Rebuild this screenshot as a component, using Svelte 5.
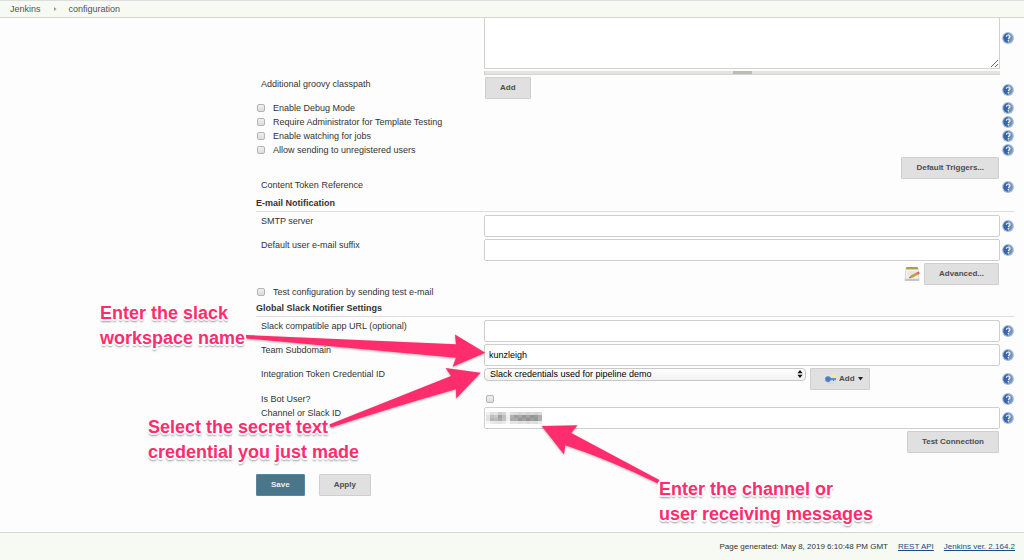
<script lang="ts">
	let teamSubdomain = $state('kunzleigh');
	let credential = $state('slack');

	const pipelineOptions = [
		{ id: 'debug', label: 'Enable Debug Mode' },
		{ id: 'require-admin', label: 'Require Administrator for Template Testing' },
		{ id: 'watching', label: 'Enable watching for jobs' },
		{ id: 'unregistered', label: 'Allow sending to unregistered users' },
	];

	// grey levels of the redacted channel id, one row of cells per line
	const redacted = [
		[240, 222, 226, 205, 212, 244, 222, 218, 212, 218, 210, 216, 210, 218],
		[226, 190, 200, 160, 190, 240, 176, 158, 168, 150, 165, 148, 156, 176],
		[224, 180, 186, 170, 194, 238, 170, 170, 150, 162, 146, 160, 150, 176],
		[244, 234, 230, 228, 234, 248, 228, 230, 222, 226, 220, 226, 222, 232],
	];

	const notes = [
		{ id: 'workspace', lines: ['Enter the slack', 'workspace name'] },
		{ id: 'credential', lines: ['Select the secret text', 'credential you just made'] },
		{ id: 'recipient', lines: ['Enter the channel or', 'user receiving messages'] },
	];
</script>

{#snippet help()}
	<button class="help" type="button" aria-label="Help">
		<svg viewBox="0 0 12 12" width="12" height="12">
			<circle cx="6" cy="6" r="5.9" fill="#a3badb" />
			<circle cx="6" cy="6" r="4.7" fill="#7392c4" />
			<path d="M6 1.3a4.7 4.7 0 0 0 0 9.4z" fill="#3a65a8" />
			<path d="M4.4 4.8C4.5 3.5 5.2 3 6.2 3c1 0 1.8.6 1.8 1.5 0 1.3-1.6 1.4-1.6 2.6" fill="none" stroke="#f2f6fb" stroke-width="1.2" />
			<circle cx="6.3" cy="8.7" r=".8" fill="#f2f6fb" />
		</svg>
	</button>
{/snippet}

<div class="page">
	<nav class="breadcrumbs">
		<a href="#jenkins">Jenkins</a>
		<svg viewBox="0 0 4 6" width="4" height="6"><path d="M1 1l2.5 2L1 5z" fill="#999" /></svg>
		<a href="#configuration">configuration</a>
	</nav>

	<main>
		<form onsubmit={(e) => e.preventDefault()}>
			<div class="row flush">
				<span></span>
				<div class="script-box">
					<textarea aria-label="Default content"></textarea>
					<div class="resize-bar"><i></i></div>
				</div>
				{@render help()}
			</div>
			<div class="row classpath">
				<span class="name">Additional groovy classpath</span>
				<div class="control start"><button class="btn" type="button">Add</button></div>
				{@render help()}
			</div>
			{#each pipelineOptions as option}
				<div class="row check-row">
					<label class="check"><input type="checkbox" id={option.id} />{option.label}</label>
					{@render help()}
				</div>
			{/each}
			<div class="row buttons flush">
				<button class="btn" type="button">Default Triggers...</button>
			</div>
			<div class="row token">
				<span class="name">Content Token Reference</span>
				<span></span>
				{@render help()}
			</div>

			<h2>E-mail Notification</h2>
			<div class="row">
				<label class="name" for="smtp">SMTP server</label>
				<input class="text" id="smtp" type="text" />
				{@render help()}
			</div>
			<div class="row">
				<label class="name" for="suffix">Default user e-mail suffix</label>
				<input class="text" id="suffix" type="text" />
				{@render help()}
			</div>
			<div class="row buttons">
				<svg viewBox="0 0 16 16" width="16" height="16">
					<path d="M2 2h12l1 12.5H1z" fill="#f1f1ef" stroke="#c9c9c5" stroke-width=".7" />
					<path d="M1 12.8h14v2H1z" fill="#c4c4c1" />
					<path d="M2.2 1h11.6v2.4H2.2z" fill="#b59a45" />
					<path d="M3.5 6h8M3.5 8h6M3.5 10h3" stroke="#d4d4d4" stroke-width=".7" />
					<path d="M5.4 12l1.4-2.3 6.6-3.4 1.3 1.7-6.6 3.6z" fill="#cf9c3c" stroke="#a77628" stroke-width=".4" />
					<path d="M12.8 6.6l1.6-1 1.6 1.6-1.6 1z" fill="#e2565a" />
					<path d="M5.2 12.2l.7-1.2.7.8z" fill="#444" />
				</svg>
				<button class="btn" type="button">Advanced...</button>
			</div>
			<div class="row check-row">
				<label class="check"><input type="checkbox" />Test configuration by sending test e-mail</label>
			</div>

			<h2>Global Slack Notifier Settings</h2>
			<div class="row">
				<label class="name" for="app-url">Slack compatible app URL (optional)</label>
				<input class="text" id="app-url" type="text" />
				{@render help()}
			</div>
			<div class="row">
				<label class="name" for="team">Team Subdomain</label>
				<input class="text" id="team" type="text" bind:value={teamSubdomain} />
				{@render help()}
			</div>
			<div class="row">
				<label class="name" for="credential">Integration Token Credential ID</label>
				<div class="control start">
					<span class="select">
						<select id="credential" bind:value={credential}>
							<option value="slack">Slack credentials used for pipeline demo</option>
						</select>
						<svg viewBox="0 0 6 8" width="6" height="8"><path d="M3 0l2.6 3.3H.4zM3 8L.4 4.7h5.2z" fill="#111" /></svg>
					</span>
					<button class="btn add-credential" type="button">
						<svg viewBox="0 0 11 10" width="11" height="10">
							<circle cx="8.6" cy="2.6" r="2.3" fill="#f5ec8e" />
							<rect x="4" y="4" width="7" height="2.2" fill="#5c8fd0" />
							<path d="M8 6h1v1H8z" fill="#4777b4" />
							<circle cx="3" cy="5.1" r="2.9" fill="#4a7fc6" />
							<path d="M2 9h7" stroke="#cfcfcf" />
						</svg>
						Add
						<svg viewBox="0 0 5 4" width="5" height="4"><path d="M0 0h5L2.5 3.6z" fill="#222" /></svg>
					</button>
				</div>
				{@render help()}
			</div>
			<div class="row bot">
				<label class="name" for="bot">Is Bot User?</label>
				<div class="control"><input id="bot" type="checkbox" /></div>
				{@render help()}
			</div>
			<div class="row">
				<label class="name" for="channel">Channel or Slack ID</label>
				<div class="channel">
					<input class="text" id="channel" type="text" />
					<svg viewBox="0 0 56 12" width="56" height="12" shape-rendering="crispEdges">
						{#each redacted as line, y}
							{#each line as grey, x}
								<rect x={x * 4} y={y * 3} width="4" height="3" fill="rgb({grey},{grey},{grey})" />
							{/each}
						{/each}
					</svg>
				</div>
				{@render help()}
			</div>
			<div class="row buttons">
				<button class="btn" type="button">Test Connection</button>
			</div>

			<div class="actions">
				<button class="btn primary" type="submit">Save</button>
				<button class="btn" type="button">Apply</button>
			</div>
		</form>
	</main>

	<footer>
		<span>Page generated: May 8, 2019 6:10:48 PM GMT</span>
		<a href="#api">REST API</a>
		<a href="#version">Jenkins ver. 2.164.2</a>
	</footer>

	<div class="annotations">
		<svg viewBox="0 0 1024 560" width="1024" height="560" fill="#ff2d6e">
			<path d="M246 335L456 344.3L455 334.6L485.3 352.7L452.6 366.8L456 357.8L246 338.4z" />
			<path d="M329 424.6L451 376L445.6 368L480.8 372.8L456.2 398.5L456 389.3Q390 408 331 427.6z" />
			<path d="M541.6 426L577.5 425.3L571.3 433L659.4 480L658 483.6Q610 460 565.3 445.2L564 454.4z" />
		</svg>
		{#each notes as note}
			<p class="note {note.id}">
				{#each note.lines as line}<span>{line}</span>{/each}
			</p>
		{/each}
	</div>
</div>

<style>
	:global(body) {
		background: #fdfdfd;
	}

	.page {
		position: relative;
		display: flex;
		flex-direction: column;
		min-height: 100vh;
		overflow: hidden;
		font: 9px/12px "Liberation Sans", Helvetica, Arial, sans-serif;
		color: #333;
	}

	.page * {
		box-sizing: border-box;
	}

	.breadcrumbs {
		display: flex;
		align-items: center;
		gap: 12px;
		height: 18px;
		padding-left: 10px;
		background: #f6faf2;
		border-top: 1px solid #dcdedb;
		border-bottom: 1px solid #d3d7cf;
	}

	.breadcrumbs a {
		color: #4d545d;
		text-decoration: none;
	}

	main {
		flex: 1;
		padding: 0 10px 20px 25%;
	}

	.row {
		display: grid;
		grid-template-columns: 228px 1fr 14px;
		align-items: start;
		min-height: 24px;
		padding-top: 2px;
	}

	.flush {
		padding-top: 0;
	}

	.name {
		padding-left: 5px;
	}

	.help {
		align-self: center;
		justify-self: end;
		width: 12px;
		height: 12px;
		padding: 0;
		border: 0;
		background: none;
		cursor: pointer;
	}

	.help svg {
		display: block;
	}

	.script-box {
		height: 58px;
	}

	.row:first-child .help {
		align-self: start;
		margin-top: 14px;
	}

	textarea {
		display: block;
		width: 100%;
		height: 51px;
		border: 1px solid #d0d2ce;
		border-top: 0;
		background: #fff;
		resize: vertical;
	}

	.resize-bar {
		display: flex;
		justify-content: center;
		height: 4px;
		margin-top: 2px;
		background: #e3e4e1;
		border-bottom: 1px solid #d3d7cf;
		border-left: 1px solid #ccc;
	}

	.resize-bar i {
		width: 19px;
		height: 3px;
		background: #babdb6;
	}

	.classpath {
		min-height: 25px;
	}

	.classpath .btn {
		margin-top: -1px;
	}

	.check-row {
		grid-template-columns: 1fr 14px;
		align-items: center;
		min-height: 14px;
		padding-top: 0;
	}

	.check {
		display: flex;
		align-items: center;
		gap: 8px;
		padding-left: 1px;
	}

	input[type="checkbox"] {
		appearance: none;
		width: 8px;
		height: 8px;
		margin: 0;
		border: 1px solid #b4b4b4;
		border-radius: 2px;
		background: linear-gradient(#f0f0f0, #dcdcdc);
	}

	input[type="checkbox"]:checked {
		background: #4b758b;
	}

	.buttons {
		display: flex;
		justify-content: flex-end;
		align-items: center;
		gap: 4px;
		padding-right: 15px;
	}

	.buttons.flush {
		align-items: start;
		min-height: 22px;
	}

	.token {
		min-height: 15px;
		padding-top: 0;
	}

	h2 {
		height: 18px;
		margin: 0 0 1px;
		border-bottom: 1px solid #ddd;
		font-size: 9px;
		line-height: 18px;
	}

	.text {
		display: block;
		width: 100%;
		height: 22px;
		padding: 0 4px;
		border: 1px solid #cdd0cd;
		border-radius: 2px;
		background: #fff;
		color: #000;
		font: inherit;
	}

	.btn {
		height: 22px;
		padding: 0 14px;
		border: 1px solid #cfd0cc;
		border-radius: 1px;
		background: #e0e0e0;
		color: #4d4d4d;
		font: inherit;
		font-size: 8px;
		font-weight: bold;
		cursor: pointer;
	}

	.primary {
		border-color: #5788a1;
		background: #4b758b;
		color: #eee;
	}

	.control {
		display: flex;
		padding-left: 2px;
	}

	.start {
		gap: 4px;
		padding-left: 1px;
	}

	.select {
		position: relative;
		width: 322px;
		margin-left: -1px;
	}

	select {
		display: block;
		appearance: none;
		width: 100%;
		height: 13px;
		padding: 0 5px;
		border: 1px solid #c8c8c8;
		border-radius: 4px;
		background: linear-gradient(#fff, #f1f1f1);
		color: #000;
		font: inherit;
		line-height: 11px;
	}

	.select svg {
		position: absolute;
		top: 2px;
		right: 3px;
		pointer-events: none;
	}

	.add-credential {
		display: flex;
		align-items: center;
		gap: 3px;
		padding: 0 6px 0 14px;
	}

	.bot {
		min-height: 15px;
		align-items: center;
	}

	.channel {
		position: relative;
	}

	.channel svg {
		position: absolute;
		top: 5px;
		left: 2px;
	}

	.actions {
		display: flex;
		gap: 14px;
		padding-top: 21px;
	}

	footer {
		display: flex;
		justify-content: flex-end;
		align-items: center;
		gap: 10px;
		height: 28px;
		padding-right: 9px;
		background: #f6faf2;
		border-top: 1px solid #d3d7cf;
		font-size: 8px;
	}

	footer a {
		color: #204a87;
	}

	.annotations {
		position: absolute;
		top: 0;
		left: 0;
		pointer-events: none;
	}

	.annotations svg {
		display: block;
		filter: drop-shadow(0 1px 1px rgba(0, 0, 0, 0.3));
	}

	.note {
		position: absolute;
		margin: 0;
		color: #ff2d6e;
		font-size: 18px;
		font-weight: bold;
		line-height: 25px;
		white-space: nowrap;
		text-shadow:
			2px 0 #fff,
			-2px 0 #fff,
			0 2px #fff,
			0 -2px #fff,
			1px 1px #fff,
			-1px 1px #fff,
			1px -1px #fff,
			-1px -1px #fff,
			0 3px 2px rgba(0, 0, 0, 0.4);
	}

	.note span {
		display: block;
	}

	.workspace {
		top: 301px;
		left: 100px;
	}

	.credential {
		top: 415px;
		left: 148px;
	}

	.recipient {
		top: 477px;
		left: 659px;
	}
</style>
